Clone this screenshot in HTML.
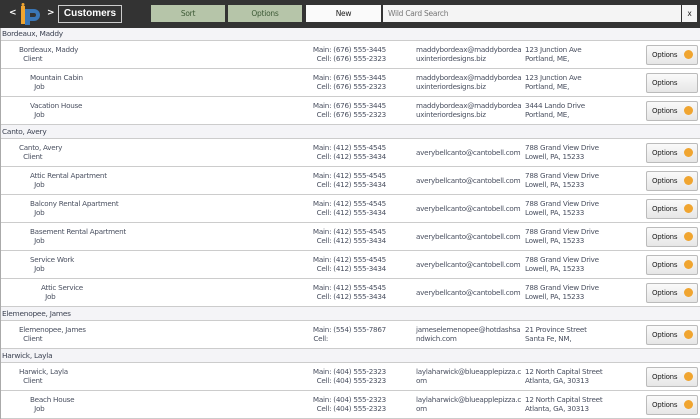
<!DOCTYPE html>
<html><head><meta charset="utf-8"><style>
*{margin:0;padding:0;box-sizing:border-box}
body{width:700px;height:418px;overflow:hidden;background:#fff;font-family:"DejaVu Sans","Liberation Sans",sans-serif;font-size:7.2px;letter-spacing:-0.25px;color:#4a5060}
.top{position:absolute;left:0;top:0;width:700px;height:28px;background:#333;}
.top div{position:absolute}
.btn{top:5px;height:17px;text-align:center;line-height:17px;font-size:7.5px}
.g{background:#b6c5a9;color:#3d5a36}
.list{position:absolute;top:28px;left:0;width:700px;border-left:1px solid #aaa}
.grp{height:14px;background:#f4f4f7;border-bottom:1px solid #ccc;line-height:13px;padding-left:1px;color:#3c4252;font-size:7.4px}
.row{height:28px;border-bottom:1px solid #ccc;position:relative}
.row div{position:absolute}
.n{top:4px;line-height:9px}
.ph{left:295px;width:90px;top:4px;text-align:right;line-height:9px}
.em{left:415px;width:108px;top:4px;line-height:9px;word-break:break-all}
.nw{white-space:nowrap;top:9px!important}
.ad{left:524px;top:4px;line-height:9px}
.ob{left:645px;top:4px;width:52px;height:20px;border:1px solid #bbb;border-radius:2px;background:linear-gradient(#fafafa,#e6e6e6);font-size:7px;color:#222;line-height:18px;padding-left:5px}
.ob i{position:absolute;right:4px;top:4px;width:9px;height:9px;border-radius:50%;background:#f0a530}
</style></head><body>
<div class="top">
 <div style="left:9px;top:8px;color:#fff;font-size:9px;font-weight:bold">&lt;</div>
 <svg style="position:absolute;left:19px;top:3px" width="24" height="22" viewBox="0 0 24 22"><rect x="2" y="3" width="4" height="18" fill="#f0a530"/><rect x="6" y="6" width="5" height="16" fill="#3a76b6"/><path d="M9 6h6a6 6 0 0 1 0 12h-6v-4h6a2 2 0 0 0 0-4h-6z" fill="#3a76b6"/><circle cx="4" cy="1.5" r="1.5" fill="#f0a530"/></svg>
 <div style="left:47px;top:8px;color:#fff;font-size:9px;font-weight:bold">&gt;</div>
 <div style="left:58px;top:5px;width:64px;height:18px;border:1px solid #ccc;color:#fff;font-weight:bold;font-size:10px;letter-spacing:0;text-align:center;line-height:16px;font-family:'Liberation Sans',sans-serif">Customers</div>
 <div class="btn g" style="left:151px;width:74px">Sort</div>
 <div class="btn g" style="left:228px;width:74px">Options</div>
 <div class="btn" style="left:306px;width:75px;background:#fafafa;color:#222">New</div>
 <div class="btn" style="left:383px;width:298px;background:#f4f4f4;color:#777;text-align:left;padding-left:5px">Wild Card Search</div>
 <div class="btn" style="left:682px;width:15px;background:#f4f4f4;color:#222">x</div>
</div>
<div class="list">
<div class="grp" style="height:13px;line-height:12px">Bordeaux, Maddy</div>
<div class="row"><div class="n" style="left:18px">Bordeaux, Maddy<br>&nbsp;&nbsp;Client</div><div class="ph">Main: (676) 555-3445<br>Cell: (676) 555-2323</div><div class="em">maddybordeax@maddybordeauxinteriordesigns.biz</div><div class="ad">123 Junction Ave<br>Portland, ME,</div><div class="ob">Options<i></i></div></div>
<div class="row"><div class="n" style="left:29px">Mountain Cabin<br>&nbsp;&nbsp;Job</div><div class="ph">Main: (676) 555-3445<br>Cell: (676) 555-2323</div><div class="em">maddybordeax@maddybordeauxinteriordesigns.biz</div><div class="ad">123 Junction Ave<br>Portland, ME,</div><div class="ob">Options</div></div>
<div class="row"><div class="n" style="left:29px">Vacation House<br>&nbsp;&nbsp;Job</div><div class="ph">Main: (676) 555-3445<br>Cell: (676) 555-2323</div><div class="em">maddybordeax@maddybordeauxinteriordesigns.biz</div><div class="ad">3444 Lando Drive<br>Portland, ME,</div><div class="ob">Options<i></i></div></div>
<div class="grp">Canto, Avery</div>
<div class="row"><div class="n" style="left:18px">Canto, Avery<br>&nbsp;&nbsp;Client</div><div class="ph">Main: (412) 555-4545<br>Cell: (412) 555-3434</div><div class="em nw">averybellcanto@cantobell.com</div><div class="ad">788 Grand View Drive<br>Lowell, PA, 15233</div><div class="ob">Options<i></i></div></div>
<div class="row"><div class="n" style="left:29px">Attic Rental Apartment<br>&nbsp;&nbsp;Job</div><div class="ph">Main: (412) 555-4545<br>Cell: (412) 555-3434</div><div class="em nw">averybellcanto@cantobell.com</div><div class="ad">788 Grand View Drive<br>Lowell, PA, 15233</div><div class="ob">Options<i></i></div></div>
<div class="row"><div class="n" style="left:29px">Balcony Rental Apartment<br>&nbsp;&nbsp;Job</div><div class="ph">Main: (412) 555-4545<br>Cell: (412) 555-3434</div><div class="em nw">averybellcanto@cantobell.com</div><div class="ad">788 Grand View Drive<br>Lowell, PA, 15233</div><div class="ob">Options<i></i></div></div>
<div class="row"><div class="n" style="left:29px">Basement Rental Apartment<br>&nbsp;&nbsp;Job</div><div class="ph">Main: (412) 555-4545<br>Cell: (412) 555-3434</div><div class="em nw">averybellcanto@cantobell.com</div><div class="ad">788 Grand View Drive<br>Lowell, PA, 15233</div><div class="ob">Options<i></i></div></div>
<div class="row"><div class="n" style="left:29px">Service Work<br>&nbsp;&nbsp;Job</div><div class="ph">Main: (412) 555-4545<br>Cell: (412) 555-3434</div><div class="em nw">averybellcanto@cantobell.com</div><div class="ad">788 Grand View Drive<br>Lowell, PA, 15233</div><div class="ob">Options<i></i></div></div>
<div class="row"><div class="n" style="left:40px">Attic Service<br>&nbsp;&nbsp;Job</div><div class="ph">Main: (412) 555-4545<br>Cell: (412) 555-3434</div><div class="em nw">averybellcanto@cantobell.com</div><div class="ad">788 Grand View Drive<br>Lowell, PA, 15233</div><div class="ob">Options<i></i></div></div>
<div class="grp">Elemenopee, James</div>
<div class="row"><div class="n" style="left:18px">Elemenopee, James<br>&nbsp;&nbsp;Client</div><div class="ph">Main: (554) 555-7867<br><span style="padding-right:58px">Cell:</span></div><div class="em">jameselemenopee@hotdashsandwich.com</div><div class="ad">21 Province Street<br>Santa Fe, NM,</div><div class="ob">Options<i></i></div></div>
<div class="grp">Harwick, Layla</div>
<div class="row"><div class="n" style="left:18px">Harwick, Layla<br>&nbsp;&nbsp;Client</div><div class="ph">Main: (404) 555-2323<br>Cell: (404) 555-2323</div><div class="em">laylaharwick@blueapplepizza.com</div><div class="ad">12 North Capital Street<br>Atlanta, GA, 30313</div><div class="ob">Options<i></i></div></div>
<div class="row"><div class="n" style="left:29px">Beach House<br>&nbsp;&nbsp;Job</div><div class="ph">Main: (404) 555-2323<br>Cell: (404) 555-2323</div><div class="em">laylaharwick@blueapplepizza.com</div><div class="ad">12 North Capital Street<br>Atlanta, GA, 30313</div><div class="ob">Options<i></i></div></div>
</div>
</body></html>
